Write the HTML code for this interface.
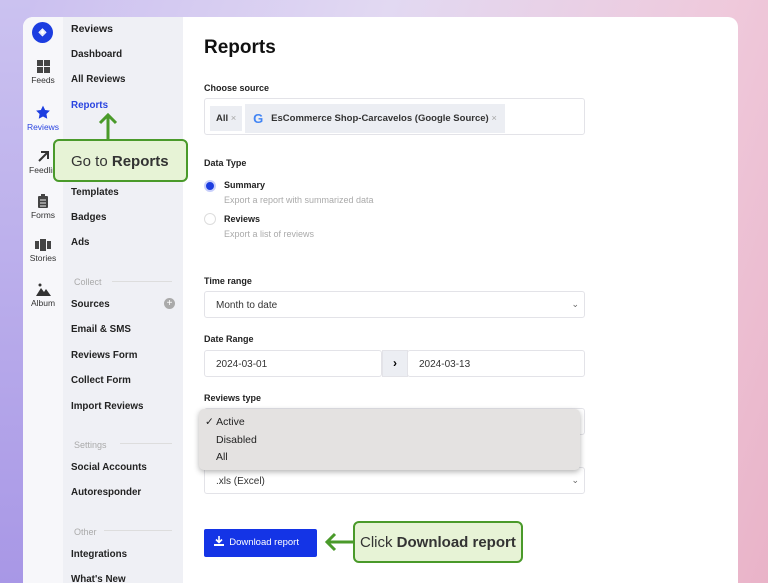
<!DOCTYPE html><html><head><style>
*{margin:0;padding:0;box-sizing:border-box}
html{width:768px;height:583px;overflow:hidden}
body{width:768px;height:583px;overflow:hidden;font-family:"Liberation Sans",Arial,sans-serif;background:linear-gradient(110deg,#c9bef0 0%,#e2d9f2 40%,#efc9db 75%,#e9b3c8 100%);position:relative}
.bgl{position:absolute;left:0;top:0;width:30px;height:583px;background:linear-gradient(180deg,#cbc2f0,#a897e6)}
.card{position:absolute;left:23px;top:17px;width:715px;height:566px;background:#fff;border-radius:10px 10px 0 0;overflow:hidden}
.rail{position:absolute;left:0;top:0;width:40px;height:100%;background:#f7f7fa}
.side{position:absolute;left:40px;top:0;width:120px;height:100%;background:#eff0f5}
.ri{position:absolute;left:0;width:40px;text-align:center;font-size:8.5px;color:#333}
.ri .ic{display:block;margin:0 auto 2px;}
.s{position:absolute;left:48px;font-size:9.8px;font-weight:bold;color:#222}
.sh{position:absolute;left:51px;font-size:9px;color:#aaa}
.line{position:absolute;height:1px;background:#ddd}
.m{position:absolute;left:181px}
.lbl{position:absolute;left:181px;font-size:9px;font-weight:bold;color:#222}
.box{position:absolute;left:181px;width:381px;height:27px;border:1px solid #e3e3e8;border-radius:3px;font-size:10px;color:#333;padding:8px 11px}
.chev{position:absolute;right:5px;top:7px;font-size:9px;color:#666}
.call{position:absolute;background:#e7f3d6;border:2px solid #4a9a2a;border-radius:6px;color:#333;font-size:15px}
</style></head><body>
<div class="bgl"></div>
<div class="card">
<div class="rail"></div>
<div class="side"></div>
<div style="position:absolute;left:9px;top:5px;width:21px;height:21px;border-radius:50%;background:#1c3de0;color:#fff;font-size:10px;text-align:center;line-height:21px;font-weight:bold">◈</div>
<div class="ri" style="top:43px"><svg class="ic" width="13" height="13"><rect x="0" y="0" width="6" height="6" fill="#444"/><rect x="7" y="0" width="6" height="6" fill="#444"/><rect x="0" y="7" width="6" height="6" fill="#444"/><rect x="7" y="7" width="6" height="6" fill="#444"/></svg>Feeds</div>
<div class="ri" style="top:88px;color:#2a44e0"><svg class="ic" width="16" height="15" viewBox="0 0 24 24"><path d="M12 1l3.4 7 7.6 1-5.5 5.3 1.3 7.7L12 18.3 5.2 22l1.3-7.7L1 9l7.6-1z" fill="#1c3de0"/></svg>Reviews</div>
<div class="ri" style="top:133px"><svg class="ic" width="13" height="13"><path d="M2 11L11 2M4 2h7v7" stroke="#333" stroke-width="2" fill="none"/></svg>Feedlin</div>
<div class="ri" style="top:177px"><svg class="ic" width="12" height="14"><rect x="1" y="2" width="10" height="12" rx="1" fill="#444"/><rect x="4" y="0" width="4" height="3" fill="#444"/><path d="M3 6h6M3 9h6M3 12h6" stroke="#eee"/></svg>Forms</div>
<div class="ri" style="top:222px"><svg class="ic" width="16" height="12"><rect x="0" y="2" width="4" height="8" fill="#444"/><rect x="5" y="0" width="6" height="12" fill="#444"/><rect x="12" y="2" width="4" height="8" fill="#444"/></svg>Stories</div>
<div class="ri" style="top:266px"><svg class="ic" width="15" height="13"><circle cx="4" cy="2" r="1.5" fill="#333"/><path d="M0 13L5 5 8 9 10 6 15 13z" fill="#333"/></svg>Album</div>
<div class="s" style="top:6px;font-size:10.5px">Reviews</div>
<div class="s" style="top:32px">Dashboard</div>
<div class="s" style="top:57px">All Reviews</div>
<div class="s" style="top:83px;color:#2a44e0">Reports</div>
<div class="s" style="top:170px">Templates</div>
<div class="s" style="top:195px">Badges</div>
<div class="s" style="top:220px">Ads</div>
<div class="sh" style="top:260px">Collect</div><div class="line" style="left:89px;top:264px;width:60px"></div>
<div class="s" style="top:282px">Sources</div><div style="position:absolute;left:141px;top:281px;width:11px;height:11px;border-radius:50%;background:#aaa;color:#fff;font-size:10px;line-height:11px;text-align:center">+</div>
<div class="s" style="top:307px">Email &amp; SMS</div>
<div class="s" style="top:333px">Reviews Form</div>
<div class="s" style="top:358px">Collect Form</div>
<div class="s" style="top:384px">Import Reviews</div>
<div class="sh" style="top:423px">Settings</div><div class="line" style="left:97px;top:426px;width:52px"></div>
<div class="s" style="top:445px">Social Accounts</div>
<div class="s" style="top:470px">Autoresponder</div>
<div class="sh" style="top:510px">Other</div><div class="line" style="left:81px;top:513px;width:68px"></div>
<div class="s" style="top:532px">Integrations</div>
<div class="s" style="top:557px">What's New</div>

<div class="m" style="top:20px;font-size:19px;font-weight:bold;color:#111">Reports</div>
<div class="lbl" style="top:66px">Choose source</div>
<div class="box" style="top:81px;height:37px;padding:5px"><span style="display:inline-block;background:#eceef3;padding:7px 6px;font-weight:bold;font-size:9.5px">All <span style="color:#aaa;font-weight:normal">×</span></span> <span style="display:inline-block;background:#eceef3;padding:7px 8px;font-weight:bold;font-size:9.5px"><span style="color:#4285f4;font-size:13px;vertical-align:-2px">G</span>&nbsp;&nbsp; EsCommerce Shop-Carcavelos (Google Source) <span style="color:#aaa;font-weight:normal">×</span></span></div>
<div class="lbl" style="top:141px">Data Type</div>
<div style="position:absolute;left:181px;top:163px;width:12px;height:12px;border-radius:50%;background:#1c3de0;border:2px solid #c9d0fb"></div>
<div class="m" style="left:201px;top:163px;font-size:9px;font-weight:bold;color:#222">Summary</div>
<div class="m" style="left:201px;top:178px;font-size:9px;color:#aaa">Export a report with summarized data</div>
<div style="position:absolute;left:181px;top:196px;width:12px;height:12px;border-radius:50%;border:1px solid #ddd"></div>
<div class="m" style="left:201px;top:197px;font-size:9px;font-weight:bold;color:#222">Reviews</div>
<div class="m" style="left:201px;top:212px;font-size:9px;color:#aaa">Export a list of reviews</div>
<div class="lbl" style="top:259px">Time range</div>
<div class="box" style="top:274px">Month to date<span class="chev">⌄</span></div>
<div class="lbl" style="top:317px">Date Range</div>
<div class="box" style="top:333px;width:178px">2024-03-01</div>
<div style="position:absolute;left:359px;top:333px;width:26px;height:27px;background:#eceef3;border:1px solid #e3e3e8;text-align:center;line-height:25px;font-size:12px;font-weight:bold">›</div>
<div class="box" style="top:333px;left:384px;width:178px">2024-03-13</div>
<div class="lbl" style="top:376px">Reviews type</div>
<div class="box" style="top:391px"></div>
<div class="box" style="top:450px">.xls (Excel)<span class="chev">⌄</span></div>
<div style="position:absolute;left:176px;top:392px;width:381px;height:61px;background:#e4e2e1;border-radius:5px;box-shadow:0 2px 6px rgba(0,0,0,.3);font-size:10.5px;color:#222;padding:5px 0 0 0;line-height:17.5px">
<div style="padding-left:6px">✓ Active</div><div style="padding-left:17px">Disabled</div><div style="padding-left:17px">All</div></div>
<div style="position:absolute;left:181px;top:512px;width:113px;height:28px;background:#1434e6;border-radius:2px;color:#fff;font-size:9.5px;line-height:28px;padding-left:10px"><svg width="10" height="10" style="vertical-align:-1px"><path d="M5 0v6M2 3.5L5 6.5 8 3.5" stroke="#fff" stroke-width="1.6" fill="none"/><rect x="0" y="8" width="10" height="2" fill="#fff"/></svg>&nbsp;&nbsp;Download report</div>
</div>
<div class="call" style="left:53px;top:139px;width:135px;height:43px;padding:12px 0 0 16px">Go to <b>Reports</b></div>
<svg style="position:absolute;left:95px;top:110px" width="25" height="31"><path d="M13 31V6M5 13l8-8 8 8" stroke="#4a9a2a" stroke-width="3" fill="none"/></svg>
<div class="call" style="left:353px;top:521px;width:170px;height:42px;padding:11px 0 0 5px">Click <b>Download report</b></div>
<svg style="position:absolute;left:321px;top:530px" width="34" height="24"><path d="M34 12H7M14 4L6 12l8 8" stroke="#4a9a2a" stroke-width="3" fill="none"/></svg>
</body></html>
